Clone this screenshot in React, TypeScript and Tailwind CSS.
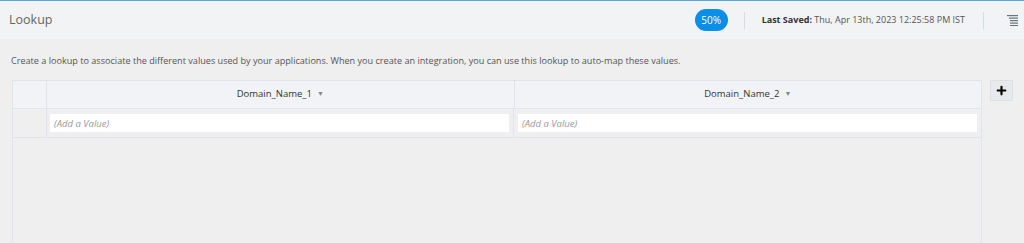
import { Plus } from "lucide-react";

function MenuIcon() {
  return (
    <svg width="11" height="11" viewBox="0 0 11 11" className="text-gray-500">
      <rect x="0" y="0" width="11" height="1.2" fill="currentColor" />
      <rect x="2" y="2.5" width="9" height="1.2" fill="currentColor" />
      <rect x="3" y="5" width="8" height="1.2" fill="currentColor" />
      <rect x="3" y="7.5" width="8" height="1.2" fill="currentColor" />
      <rect x="3" y="10" width="8" height="1.2" fill="currentColor" />
    </svg>
  );
}

function HeaderCell({ name }: { name: string }) {
  return (
    <div className="flex-1 flex items-center justify-center gap-[5px] border-l border-[#dfe5eb] text-[9.5px] text-[#333]">
      <span>{name}</span>
      <span className="text-[7px] text-[#888]">▼</span>
    </div>
  );
}

function ValueCell({ first }: { first?: boolean }) {
  return (
    <div className={"flex-1 flex items-center border-l border-[#dfe5eb] " + (first ? "pl-[3px] pr-[4px]" : "pl-[4px] pr-[4px]")}>
      <input
        className="w-full h-[18px] bg-white px-[4px] text-[9.5px] italic placeholder:text-[#999] outline-none"
        placeholder="(Add a Value)"
      />
    </div>
  );
}

export default function App() {
  return (
    <div className="w-[1024px] h-[243px] flex flex-col bg-[#efefef] overflow-hidden" style={{ fontFamily: '"Open Sans", "Noto Sans", sans-serif' }}>
      {/* ヘッダー */}
      <div className="h-[39px] shrink-0 flex items-center bg-[#f2f3f5] border-t border-[#5aa8e2] pl-[9px]">
        <h1 className="text-[12.5px] text-[#666]">Lookup</h1>
        <div className="ml-auto flex items-center">
          <span className="h-[22px] w-[33px] rounded-full bg-[#0b8fe6] text-white text-[10px] flex items-center justify-center">50%</span>
          <span className="ml-[16px] h-[17px] w-px bg-[#d5dce3]" />
          <p className="ml-[17px] text-[9px] text-[#555]">
            <span className="font-bold text-[#333]">Last Saved:</span> Thu, Apr 13th, 2023 12:25:58 PM IST
          </p>
          <span className="ml-[18px] h-[17px] w-px bg-[#d5dce3]" />
          <span className="ml-[23px] mr-[6px]">
            <MenuIcon />
          </span>
        </div>
      </div>

      {/* 説明 */}
      <p className="pl-[11px] pt-[15px] text-[9.1px] text-[#555] leading-[13px]">
        Create a lookup to associate the different values used by your applications. When you create an integration, you can use this lookup to auto-map these values.
      </p>

      {/* テーブル */}
      <div className="flex flex-1 pl-[12px] pt-[13px]">
        <div className="w-[970px] flex flex-col border-x border-t border-[#dfe5eb]">
          <div className="h-[28px] flex bg-[#f1f3f6] border-b border-[#dfe5eb]">
            <div className="w-[33px]" />
            <HeaderCell name="Domain_Name_1" />
            <HeaderCell name="Domain_Name_2" />
          </div>
          <div className="h-[29px] flex border-b border-[#dfe5eb]">
            <div className="w-[33px]" />
            <ValueCell first />
            <ValueCell />
          </div>
          <div className="flex-1" />
        </div>
        <div className="pl-[8px]">
          <button className="w-[23px] h-[21px] flex items-center justify-center bg-[#e7e9ec] border border-[#dcdfe3] rounded-[1px]">
            <Plus size={13} strokeWidth={4} className="text-black" />
          </button>
        </div>
      </div>
    </div>
  );
}
